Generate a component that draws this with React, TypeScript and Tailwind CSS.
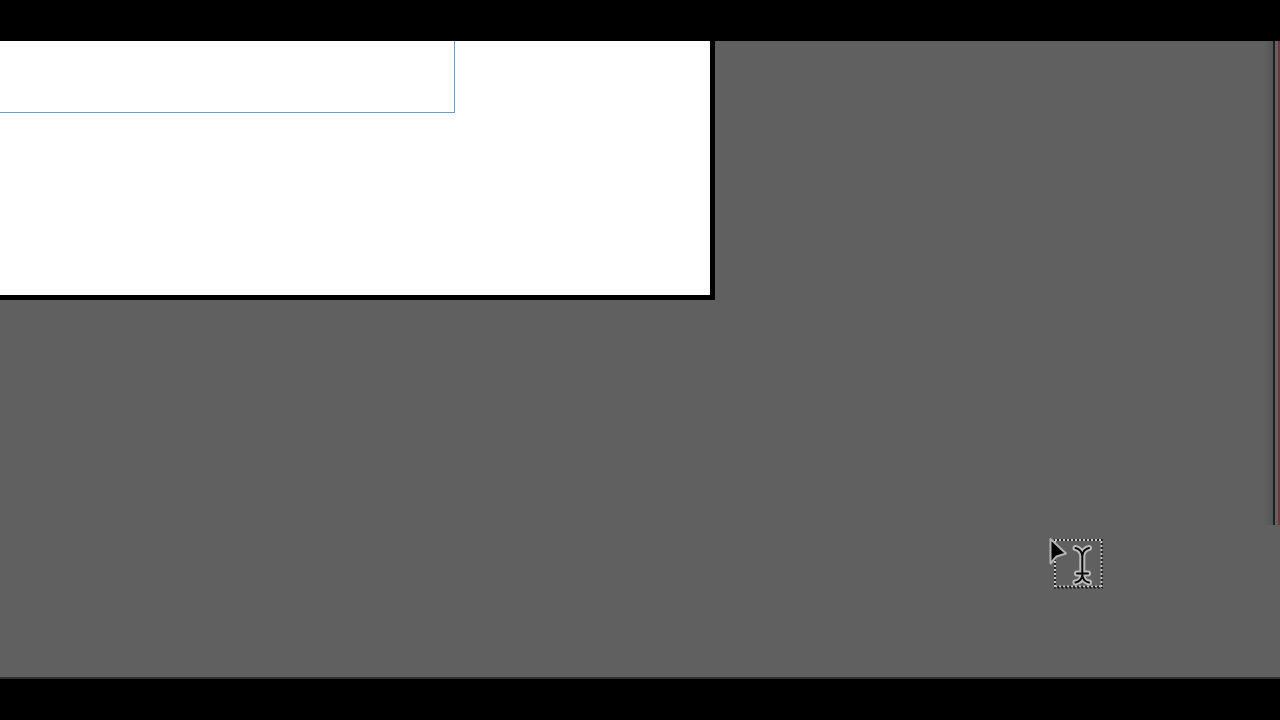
function TextFrameCursor(): JSX.Element {
  return (
    <svg
      className="absolute right-[174px] bottom-[82px]"
      width="60"
      height="60"
      viewBox="1046 535 60 60"
      fill="none"
      aria-hidden="true"
    >
      {/* marquee */}
      <path d="M1055 540H1102V587H1055Z" stroke="#242424" strokeWidth="2" />
      <path
        d="M1055 540H1102M1055 541V587M1101.5 541V587M1055 586.5H1102"
        stroke="#c8c8c8"
        strokeWidth="2"
        strokeDasharray="2 2"
      />
      <path d="M1054 588H1103" stroke="#161616" strokeWidth="1" strokeDasharray="2 2" />
      {/* text beam */}
      <g strokeLinecap="round" strokeLinejoin="round">
        <path
          d="M1075.5 548C1079 548.5 1082.3 552 1082.3 556V575C1082.3 579 1079 582 1075.5 582.5M1089 548C1085.5 548.5 1082.3 552 1082.3 556M1082.3 575C1082.3 579 1085.5 582 1089 582.5M1077 573.5H1088"
          stroke="#bdbdbd"
          strokeWidth="6"
        />
        <path
          d="M1075.5 548C1079 548.5 1082.3 552 1082.3 556V575C1082.3 579 1079 582 1075.5 582.5M1089 548C1085.5 548.5 1082.3 552 1082.3 556M1082.3 575C1082.3 579 1085.5 582 1089 582.5M1077 573.5H1088"
          stroke="#090909"
          strokeWidth="2"
        />
      </g>
      <path
        d="M1050.5 539V563.5L1056.5 556.5L1066 553.5Z"
        fill="#000"
        stroke="#b4b4b4"
        strokeWidth="2"
        strokeLinejoin="round"
      />
    </svg>
  );
}

function Page(): JSX.Element {
  return (
    <div className="h-[259px] w-[715px] border-r-[5px] border-b-[5px] border-black bg-white">
      <div className="h-[72px] w-[455px] border-r border-b border-[#6d9dce]" />
    </div>
  );
}

function PanelEdge(): JSX.Element {
  return (
    <div className="flex h-[484px] w-4">
      <div className="flex-1 bg-linear-to-r from-[#606060] to-[#555555]" />
      <div className="w-[2px] bg-[#1b2320]" />
      <div className="w-[3px] bg-[#66605f]" />
      <div className="w-[2px] bg-[#6b3a40]" />
    </div>
  );
}

export default function App(): JSX.Element {
  return (
    <div className="flex h-screen flex-col overflow-hidden bg-black">
      <header className="h-[41px] shrink-0 bg-black" />
      <main className="relative flex flex-1 items-start justify-between border-b-2 border-[#303030] bg-[#606060]">
        <Page />
        <PanelEdge />
        <TextFrameCursor />
      </main>
      <footer className="h-[41px] shrink-0 bg-black" />
    </div>
  );
}
